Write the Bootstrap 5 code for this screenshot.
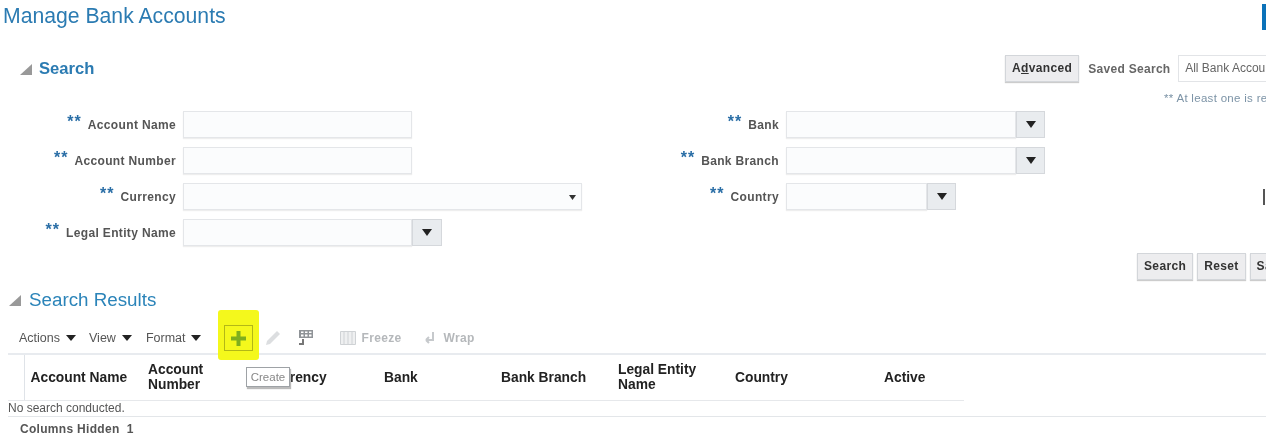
<!DOCTYPE html>
<html lang="en"><head><meta charset="utf-8"><title>Manage Bank Accounts</title>
<link href="https://cdn.jsdelivr.net/npm/bootstrap@5.3.0/dist/css/bootstrap.min.css" rel="stylesheet">
<style>
html,body{height:433px;overflow:hidden;background:#fff}
body{font-family:"Liberation Sans",Arial,sans-serif;color:#4a4a4a;width:1266px;filter:blur(.45px)}
.top-bar{height:36px;padding:3px 0 0 3px}
.page-title{font-size:21.2px;line-height:26px;font-weight:400;color:#2b7bb2;margin:0}
.edge-bar{width:4px;height:26px;margin-top:1px;background:#0b72b9}
.search-head{height:27px;margin-top:19px}
.head-left{flex:0 0 1005px;padding-left:20px}
.search-title{font-size:16.6px;font-weight:700;color:#2b7bb2;margin:0 0 0 7px;line-height:26px}
.ora-btn{flex:none;height:27px;padding:0 6px;background:#ededef;border:1px solid #d3d6da;box-shadow:0 1px 1px #ccc;font-size:12px;font-weight:700;letter-spacing:.35px;color:#333;line-height:25px;border-radius:0}
.saved-label{flex:none;margin-left:9px;width:90px;font-size:12px;font-weight:700;letter-spacing:.3px;color:#666}
.saved-box{flex:none;width:120px;height:27px;border:1px solid #e2e4e7;padding-left:6px;font-size:12px;line-height:25px;white-space:nowrap;color:#666}
.req-note{padding-left:1164px;height:16px;margin-top:8px;font-size:11.5px;line-height:16px;color:#7c93a6;white-space:nowrap;letter-spacing:.3px}
.form-area{margin-top:5px}
.form-col{flex:0 0 603px}
.field-row{height:26px;margin-bottom:10px}
.field-label{flex:0 0 176px;margin-right:7px;text-align:right;font-size:12px;line-height:16px;font-weight:700;letter-spacing:.35px;color:#555;white-space:nowrap}
.stars{color:#2a6ea6;font-size:16px;margin-right:6px;position:relative;top:-2px;letter-spacing:1px}
.ora-input{height:27px;background:#fbfcfd;border:1px solid #e4e6e9;box-shadow:0 1px 1px #eee}
.w-229{width:229px}.w-399{width:399px}.w-230{width:230px}.w-140{width:141px}
.drop-btn{width:29px;height:27px;background:#e9ecef;border:1px solid #d5d8dc}
.drop-wide{width:30px}
.tail-mark{width:2px;height:16px;background:#555;margin:1px 0 0 307px}
.select-arrow{right:5px;top:11px}
.select-wrap{position:relative}
.action-row{margin:-2px 0 0 1137px;gap:4px;height:27px}
.results-head{height:27px;margin-top:6px;padding-left:9px}
.results-title{font-size:18.8px;font-weight:400;color:#2b84b9;margin:0 0 0 8px;line-height:26px}
.tool-row{height:42px;margin-left:8px;border-bottom:2px solid #e8ebef;padding:10px 0 0 11px;font-size:12.5px;color:#555}
.tool-item{flex:none;display:flex;align-items:center;gap:6px}
.hl-zone{flex:none;width:41px;height:50px;margin:-10px 0 0 17px;background:#f4f81c;border-radius:3px;display:flex;align-items:flex-end;justify-content:center;padding-bottom:9px;position:relative;top:2px}
.hl-box{width:29px;height:26px;border:1px solid #b3b816;display:flex;align-items:center;justify-content:center}
.off-text{font-size:12px;font-weight:700;color:#b5b8bb;letter-spacing:.35px}
.res-table{width:956px;table-layout:fixed;border-collapse:collapse;margin:0 0 0 8px}
.res-table th{font-size:13.8px;line-height:15px;font-weight:700;color:#222;padding:0 4px 0 6px;height:45px;vertical-align:middle;border-bottom:1px solid #e6e8eb;background:#fff}
.res-table th.gutter{border-right:1px solid #dfe3e8;padding:0}
.no-result{margin-left:8px;height:16px;font-size:12px;line-height:14px;color:#555;border-bottom:1px solid #e3e6e9}
.hidden-cols{padding:5px 0 0 20px;font-size:12px;line-height:14px;font-weight:700;letter-spacing:.3px;color:#555;white-space:nowrap}
.tip-box{position:absolute;left:246px;top:367px;width:44px;height:20px;background:#fff;border:1px solid #9ea2a6;box-shadow:1px 2px 1px #bbb;font-size:11.5px;line-height:18px;text-align:center;color:#888}
</style></head><body>
<div class="top-bar d-flex justify-content-between"><h1 class="page-title">Manage Bank Accounts</h1><div class="edge-bar"></div></div>

<div class="search-head d-flex align-items-center">
  <div class="head-left d-flex align-items-center">
    <svg width="12" height="12" viewBox="0 0 12 12"><path d="M12 1V12H0Z" fill="#999"/></svg>
    <h2 class="search-title">Search</h2>
  </div>
  <button class="ora-btn" type="button">A<u>d</u>vanced</button>
  <div class="saved-label">Saved Search</div>
  <div class="saved-box">All Bank Accounts</div>
</div>
<div class="req-note">** At least one is required</div>

<div class="form-area d-flex">
  <div class="form-col">
    <div class="field-row d-flex align-items-center"><div class="field-label"><span class="stars">**</span>Account Name</div><div class="ora-input w-229"></div></div>
    <div class="field-row d-flex align-items-center"><div class="field-label"><span class="stars">**</span>Account Number</div><div class="ora-input w-229"></div></div>
    <div class="field-row d-flex align-items-center"><div class="field-label"><span class="stars">**</span>Currency</div><div class="ora-input w-399 select-wrap"><svg class="select-arrow position-absolute" width="7" height="5" viewBox="0 0 7 5"><path d="M0 0H7L3.5 5Z" fill="#333"/></svg></div></div>
    <div class="field-row d-flex align-items-center"><div class="field-label"><span class="stars">**</span>Legal Entity Name</div><div class="ora-input w-229"></div><div class="drop-btn drop-wide d-flex align-items-center justify-content-center"><svg width="10" height="7" viewBox="0 0 10 7"><path d="M0 0H10L5 7Z" fill="#222"/></svg></div></div>
  </div>
  <div class="flex-grow-1">
    <div class="field-row d-flex align-items-center"><div class="field-label"><span class="stars">**</span>Bank</div><div class="ora-input w-230"></div><div class="drop-btn d-flex align-items-center justify-content-center"><svg width="10" height="7" viewBox="0 0 10 7"><path d="M0 0H10L5 7Z" fill="#222"/></svg></div></div>
    <div class="field-row d-flex align-items-center"><div class="field-label"><span class="stars">**</span>Bank Branch</div><div class="ora-input w-230"></div><div class="drop-btn d-flex align-items-center justify-content-center"><svg width="10" height="7" viewBox="0 0 10 7"><path d="M0 0H10L5 7Z" fill="#222"/></svg></div></div>
    <div class="field-row d-flex align-items-center"><div class="field-label"><span class="stars">**</span>Country</div><div class="ora-input w-140"></div><div class="drop-btn d-flex align-items-center justify-content-center"><svg width="10" height="7" viewBox="0 0 10 7"><path d="M0 0H10L5 7Z" fill="#222"/></svg></div><div class="tail-mark"></div></div>
  </div>
</div>

<div class="action-row d-flex">
  <button class="ora-btn" type="button">Search</button>
  <button class="ora-btn" type="button">Reset</button>
  <button class="ora-btn" type="button">Save...</button>
</div>

<div class="results-head d-flex align-items-center">
  <svg width="12" height="12" viewBox="0 0 12 12"><path d="M12 1V12H0Z" fill="#999"/></svg>
  <h2 class="results-title">Search Results</h2>
</div>

<div class="tool-row d-flex align-items-center">
  <div class="tool-item">Actions <svg width="10" height="6" viewBox="0 0 10 6"><path d="M0 0H10L5 6Z" fill="#222"/></svg></div>
  <div class="tool-item" style="margin-left:13px">View <svg width="10" height="6" viewBox="0 0 10 6"><path d="M0 0H10L5 6Z" fill="#222"/></svg></div>
  <div class="tool-item" style="margin-left:14px">Format <svg width="10" height="6" viewBox="0 0 10 6"><path d="M0 0H10L5 6Z" fill="#222"/></svg></div>
  <div class="hl-zone"><div class="hl-box"><svg width="15" height="15" viewBox="0 0 15 15"><path d="M5.5 0H9.500V5.500H15V9.500H9.500V15H5.500V9.500H0V5.500H5.500Z" fill="#7fae1d"/></svg></div></div>
  <svg width="18" height="18" viewBox="0 0 18 18" style="margin-left:5px"><path d="M2 16 3 12 13 2 16 5 6 15Z" fill="#dcdee0"/></svg>
  <svg width="18" height="18" viewBox="0 0 18 18" style="margin-left:14px"><path d="M3 1H17V9H3ZM5 2.500V4H7.500V2.500ZM9 2.500V4H11.500V2.500ZM13 2.500V4H15.500V2.500ZM5 5.500V7.500H7.500V5.500ZM9 5.500V7.500H11.500V5.500ZM13 5.500V7.500H15.500V5.500Z" fill="#8f9397" fill-rule="evenodd"/><path d="M7 10V15H3" stroke="#777" stroke-width="2" fill="none"/></svg>
  <svg width="16" height="14" viewBox="0 0 16 14" style="margin-left:26px"><path d="M.5.500H15.500V13.500H.5ZM4 1V13M8 1V13M12 1V13" stroke="#cfd2d5" fill="#eff0f1"/></svg>
  <span class="off-text" style="margin-left:5px">Freeze</span>
  <svg width="15" height="14" viewBox="0 0 15 14" style="margin-left:19px"><path d="M12 1V9H5M5 9 8 6M5 9 8 12" stroke="#c6c9cc" stroke-width="2" fill="none"/></svg>
  <span class="off-text" style="margin-left:8px">Wrap</span>
</div>

<table class="res-table">
  <colgroup><col style="width:16px"><col style="width:118px"><col style="width:118px"><col style="width:118px"><col style="width:117px"><col style="width:117px"><col style="width:117px"><col style="width:149px"><col style="width:86px"></colgroup>
  <thead><tr><th class="gutter"></th><th>Account Name</th><th>Account Number</th><th>Currency</th><th>Bank</th><th>Bank Branch</th><th>Legal Entity Name</th><th>Country</th><th>Active</th></tr></thead>
</table>
<div class="no-result">No search conducted.</div>
<div class="hidden-cols">Columns Hidden&nbsp; 1</div>
<div class="tip-box">Create</div>
</body></html>
